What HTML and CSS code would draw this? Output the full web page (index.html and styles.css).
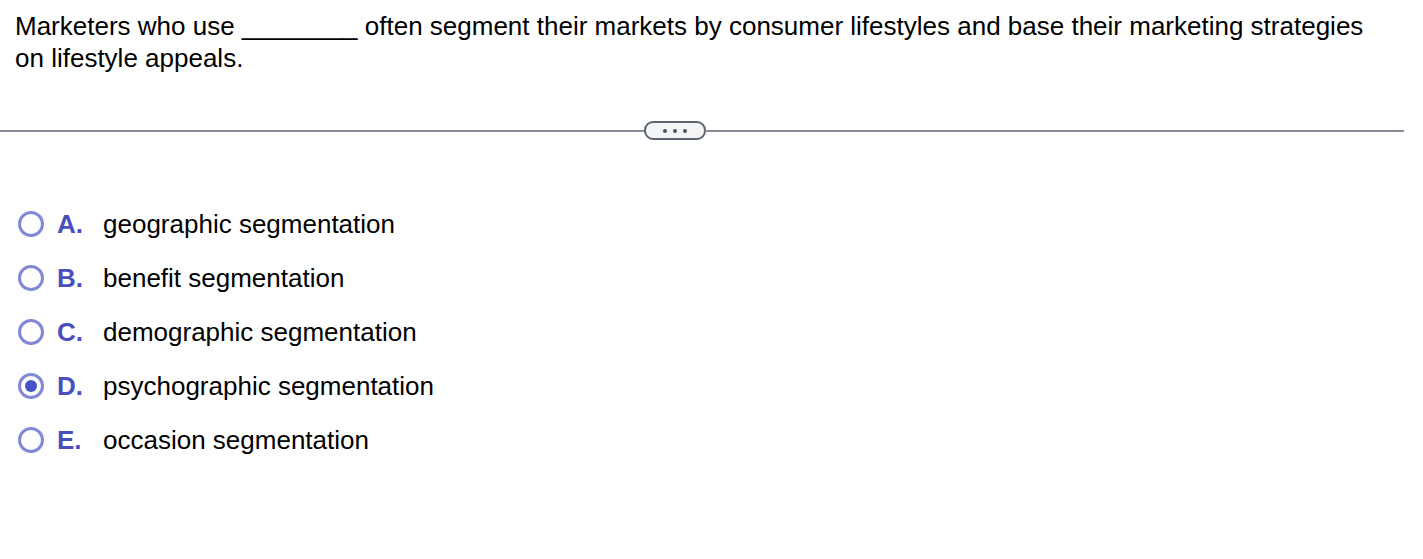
FILE: index.html
```html
<!DOCTYPE html>
<html>
<head>
<meta charset="utf-8">
<link rel="stylesheet" href="styles.css">
</head>
<body>
<div class="question">
  <p class="stem">Marketers who use ________ often segment their markets by consumer lifestyles and base their marketing strategies on lifestyle appeals.</p>
</div>
<div class="divider">
  <span class="line left"></span>
  <span class="pill"><i></i><i></i><i></i></span>
  <span class="line"></span>
</div>
<ul class="options">
  <li class="option"><span class="radio"></span><span class="letter">A.</span><span class="text">geographic segmentation</span></li>
  <li class="option"><span class="radio"></span><span class="letter">B.</span><span class="text">benefit segmentation</span></li>
  <li class="option"><span class="radio"></span><span class="letter">C.</span><span class="text">demographic segmentation</span></li>
  <li class="option"><span class="radio checked"></span><span class="letter">D.</span><span class="text">psychographic segmentation</span></li>
  <li class="option"><span class="radio"></span><span class="letter">E.</span><span class="text">occasion segmentation</span></li>
</ul>
</body>
</html>
```

FILE: styles.css
```css
html, body {
  margin: 0;
  padding: 0;
  background: #ffffff;
}
body {
  font-family: "Liberation Sans", Arial, sans-serif;
  color: #000000;
  font-size: 26px;
}
.question {
  padding: 10px 15px 0 15px;
}
.stem {
  margin: 0;
  line-height: 32px;
  max-width: 1370px;
}
.divider {
  display: flex;
  align-items: center;
  margin-top: 47px;
  width: 1404px;
}
.line {
  flex: 1;
  height: 2px;
  background: #8a8d99;
}
.line.left {
  flex: 0 0 645px;
}
.pill {
  width: 58px;
  height: 15px;
  border: 2px solid #5c6472;
  border-radius: 9px;
  background: #f3f4f6;
  display: flex;
  align-items: center;
  justify-content: center;
  gap: 6px;
  margin: 0 -1px;
}
.pill i {
  width: 4px;
  height: 4px;
  border-radius: 50%;
  background: #4a5060;
}
.options {
  list-style: none;
  margin: 70px 0 0 0;
  padding: 0 0 0 18px;
  display: flex;
  flex-direction: column;
  gap: 26px;
}
.option {
  display: flex;
  align-items: center;
  height: 28px;
}
.radio {
  width: 20px;
  height: 20px;
  border: 3px solid #8189d6;
  border-radius: 50%;
  box-sizing: content-box;
  flex: none;
  display: flex;
  align-items: center;
  justify-content: center;
}
.radio.checked::after {
  content: "";
  width: 12px;
  height: 12px;
  border-radius: 50%;
  background: #4752c4;
}
.letter {
  font-weight: bold;
  color: #4a4fbf;
  margin-left: 13px;
  width: 46px;
}
.text {
  color: #000000;
}
```
